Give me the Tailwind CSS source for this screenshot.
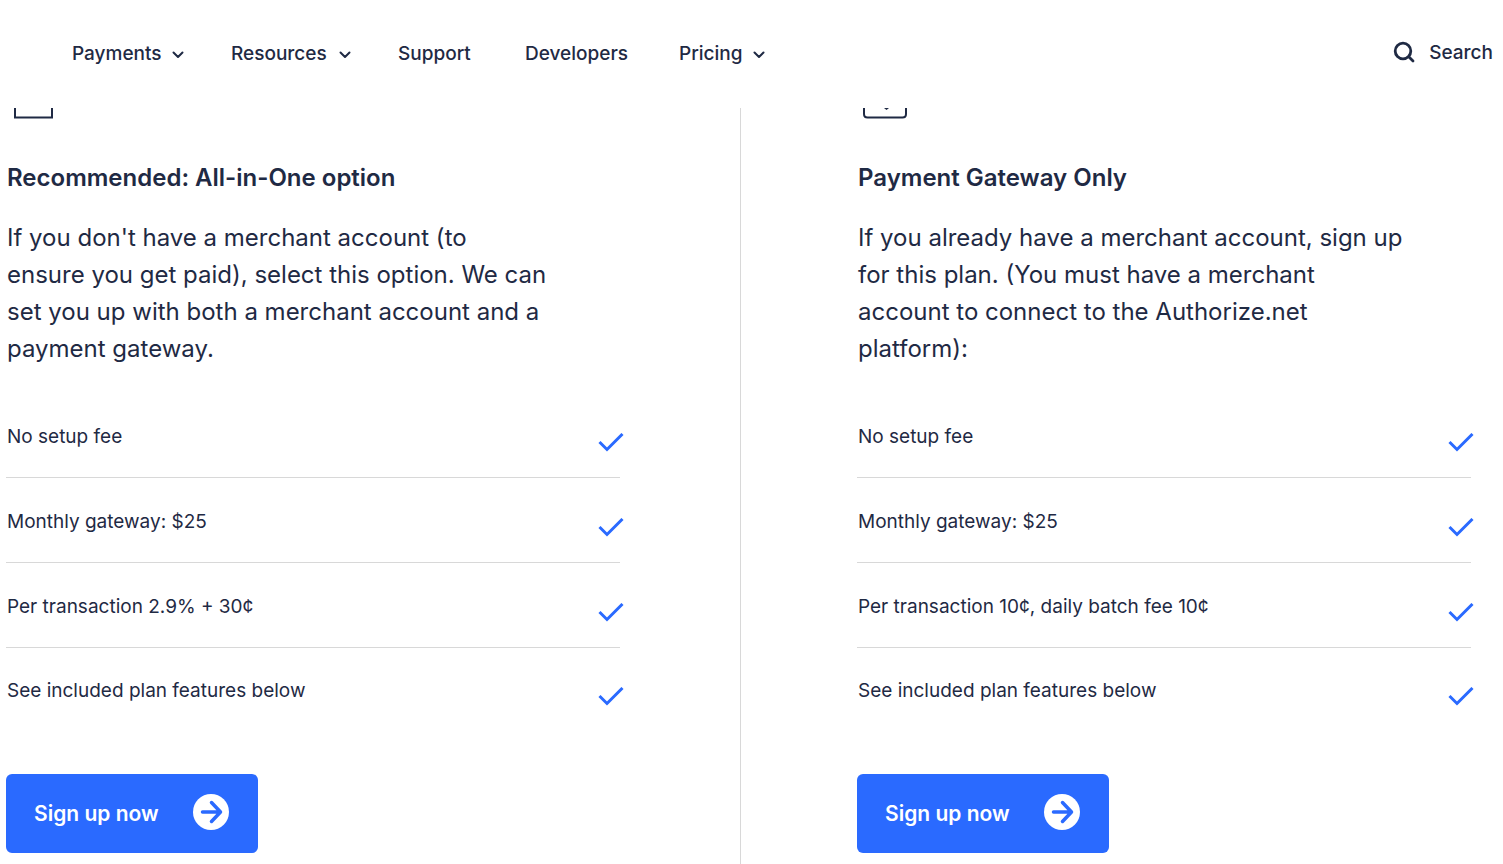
<!DOCTYPE html>
<html lang="en">
<head>
<meta charset="utf-8">
<meta name="viewport" content="width=device-width, initial-scale=1">
<title>Pricing plans</title>
<script src="https://cdn.jsdelivr.net/npm/@tailwindcss/browser@4"></script>
</head>
<body class="flex min-h-screen flex-col overflow-x-hidden bg-white font-['Inter','Liberation_Sans',sans-serif] text-[#1f2a44]">
<svg class="hidden" aria-hidden="true">
  <symbol id="chevron" viewBox="0 0 12 8"><path d="M1.500 1.500 6 6l4.500-4.500" fill="none" stroke="currentColor" stroke-width="2" stroke-linecap="round" stroke-linejoin="round"/></symbol>
  <symbol id="check" viewBox="0 0 26 20"><path d="M1.500 9 9 16.500 24.500 1" fill="none" stroke="currentColor" stroke-width="3"/></symbol>
  <symbol id="arrow" viewBox="0 0 36 36"><circle cx="18" cy="18" r="18" fill="#fff"/><path d="M9.500 18H27M18.500 8.500 27.500 18l-9 9.500" fill="none" stroke="#2a6aff" stroke-width="3.500" stroke-linecap="round" stroke-linejoin="round"/></symbol>
</svg>
<header class="flex h-[108px] shrink-0 items-center justify-between pl-[72px] pr-[10px]">
  <nav aria-label="Main" class="flex items-center text-[19px] leading-6 font-medium whitespace-nowrap">
    <button type="button" class="flex w-[159px] items-center gap-2.5">Payments<svg class="mt-0.5 h-2 w-3"><use href="#chevron"/></svg></button>
    <button type="button" class="flex w-[167px] items-center gap-3">Resources<svg class="mt-0.5 h-2 w-3"><use href="#chevron"/></svg></button>
    <a href="#" class="w-[127px]">Support</a>
    <a href="#" class="w-[154px]">Developers</a>
    <button type="button" class="flex items-center gap-2.5">Pricing<svg class="mt-0.5 h-2 w-3"><use href="#chevron"/></svg></button>
  </nav>
  <button type="button" class="mb-0.5 flex items-center gap-3.5 text-[19px] leading-6 font-medium">
    <svg class="mb-0.5 size-[22px]" viewBox="0 0 22 22" fill="none" stroke="currentColor" stroke-width="2.800" stroke-linecap="round"><circle cx="10" cy="10" r="7.800"/><path d="m16 16 4 4"/></svg>
    Search
  </button>
</header>
<main class="grid flex-1 grid-cols-[741fr_762fr]">
  <section class="border-r border-[#d8d8d8] pr-[120px] pl-[6px]">
    <svg class="ml-2 block h-3 w-10" viewBox="0 0 40 12" fill="none" stroke="currentColor" stroke-width="2"><path d="M1 0v9.500h37V0"/></svg>
    <h2 class="mt-[42px] pl-px text-2xl leading-8 font-semibold">Recommended: All-in-One option</h2>
    <p class="mt-[25px] pl-px text-2xl leading-[37px]">If you don't have a merchant account (to<br>ensure you get paid), select this option. We can<br>set you up with both a merchant account and a<br>payment gateway.</p>
    <ul class="mt-[26px] text-[19px] leading-7">
      <li class="flex h-[85px] items-center justify-between border-b border-[#d8d8d8] pt-1 pl-px">No setup fee<svg class="mt-3 -mr-1 h-5 w-[26px] text-[#2a6aff]"><use href="#check"/></svg></li>
      <li class="flex h-[85px] items-center justify-between border-b border-[#d8d8d8] pt-1 pl-px">Monthly gateway: $25<svg class="mt-3 -mr-1 h-5 w-[26px] text-[#2a6aff]"><use href="#check"/></svg></li>
      <li class="flex h-[85px] items-center justify-between border-b border-[#d8d8d8] pt-1 pl-px">Per transaction 2.9% + 30¢<svg class="mt-3 -mr-1 h-5 w-[26px] text-[#2a6aff]"><use href="#check"/></svg></li>
      <li class="flex h-[81px] items-center justify-between pt-1 pl-px">See included plan features below<svg class="mt-3 -mr-1 h-5 w-[26px] text-[#2a6aff]"><use href="#check"/></svg></li>
    </ul>
    <a href="#" class="mt-[45px] mb-[11px] flex h-[79px] w-[252px] items-center justify-between rounded-md bg-[#2a6aff] pr-[29px] pb-[3px] pl-7 text-[21px] leading-7 font-semibold text-white"><span class="pt-1">Sign up now</span><svg class="size-9"><use href="#arrow"/></svg></a>
  </section>
  <section class="pr-8 pl-[116px]">
    <svg class="ml-1 block h-3 w-12" viewBox="0 0 48 12" fill="none" stroke="currentColor" stroke-width="2"><path d="M3 0v6q0 3.500 3.500 3.500h35q3.500 0 3.500-3.500V0"/><path d="M23 0h5l-2.500 2Z" fill="currentColor" stroke="none"/></svg>
    <h2 class="mt-[42px] pl-px text-2xl leading-8 font-semibold">Payment Gateway Only</h2>
    <p class="mt-[25px] pl-px text-2xl leading-[37px]">If you already have a merchant account, sign up<br>for this plan. (You must have a merchant<br>account to connect to the Authorize.net<br>platform):</p>
    <ul class="mt-[26px] text-[19px] leading-7">
      <li class="flex h-[85px] items-center justify-between border-b border-[#d8d8d8] pt-1 pl-px">No setup fee<svg class="mt-3 -mr-[3px] h-5 w-[26px] text-[#2a6aff]"><use href="#check"/></svg></li>
      <li class="flex h-[85px] items-center justify-between border-b border-[#d8d8d8] pt-1 pl-px">Monthly gateway: $25<svg class="mt-3 -mr-[3px] h-5 w-[26px] text-[#2a6aff]"><use href="#check"/></svg></li>
      <li class="flex h-[85px] items-center justify-between border-b border-[#d8d8d8] pt-1 pl-px">Per transaction 10¢, daily batch fee 10¢<svg class="mt-3 -mr-[3px] h-5 w-[26px] text-[#2a6aff]"><use href="#check"/></svg></li>
      <li class="flex h-[81px] items-center justify-between pt-1 pl-px">See included plan features below<svg class="mt-3 -mr-[3px] h-5 w-[26px] text-[#2a6aff]"><use href="#check"/></svg></li>
    </ul>
    <a href="#" class="mt-[45px] mb-[11px] flex h-[79px] w-[252px] items-center justify-between rounded-md bg-[#2a6aff] pr-[29px] pb-[3px] pl-7 text-[21px] leading-7 font-semibold text-white"><span class="pt-1">Sign up now</span><svg class="size-9"><use href="#arrow"/></svg></a>
  </section>
</main>
</body>
</html>
